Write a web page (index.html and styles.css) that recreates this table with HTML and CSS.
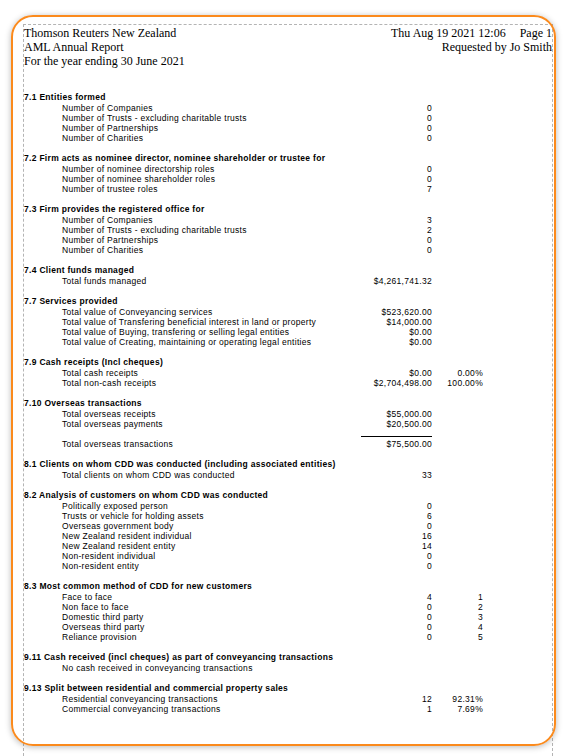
FILE: index.html
```html
<!DOCTYPE html>
<html>
<head>
<meta charset="utf-8">
<link rel="stylesheet" href="styles.css">
</head>
<body>
<div class="page">
  <header class="rpt-head">
    <div class="head-left">
      <div>Thomson Reuters New Zealand</div>
      <div>AML Annual Report</div>
      <div>For the year ending 30 June 2021</div>
    </div>
    <div class="head-right">
      <div><span>Thu Aug 19 2021 12:06</span><span class="pg">Page 1</span></div>
      <div>Requested by Jo Smith</div>
    </div>
  </header>

  <main class="report">
    <section class="sec">
      <h2>7.1 Entities formed</h2>
      <div class="row"><span class="lbl">Number of Companies</span><span class="val">0</span><span class="pct"></span></div>
      <div class="row"><span class="lbl">Number of Trusts - excluding charitable trusts</span><span class="val">0</span><span class="pct"></span></div>
      <div class="row"><span class="lbl">Number of Partnerships</span><span class="val">0</span><span class="pct"></span></div>
      <div class="row"><span class="lbl">Number of Charities</span><span class="val">0</span><span class="pct"></span></div>
    </section>

    <section class="sec">
      <h2>7.2 Firm acts as nominee director, nominee shareholder or trustee for</h2>
      <div class="row"><span class="lbl">Number of nominee directorship roles</span><span class="val">0</span><span class="pct"></span></div>
      <div class="row"><span class="lbl">Number of nominee shareholder roles</span><span class="val">0</span><span class="pct"></span></div>
      <div class="row"><span class="lbl">Number of trustee roles</span><span class="val">7</span><span class="pct"></span></div>
    </section>

    <section class="sec">
      <h2>7.3 Firm provides the registered office for</h2>
      <div class="row"><span class="lbl">Number of Companies</span><span class="val">3</span><span class="pct"></span></div>
      <div class="row"><span class="lbl">Number of Trusts - excluding charitable trusts</span><span class="val">2</span><span class="pct"></span></div>
      <div class="row"><span class="lbl">Number of Partnerships</span><span class="val">0</span><span class="pct"></span></div>
      <div class="row"><span class="lbl">Number of Charities</span><span class="val">0</span><span class="pct"></span></div>
    </section>

    <section class="sec">
      <h2>7.4 Client funds managed</h2>
      <div class="row"><span class="lbl">Total funds managed</span><span class="val">$4,261,741.32</span><span class="pct"></span></div>
    </section>

    <section class="sec">
      <h2>7.7 Services provided</h2>
      <div class="row"><span class="lbl">Total value of Conveyancing services</span><span class="val">$523,620.00</span><span class="pct"></span></div>
      <div class="row"><span class="lbl">Total value of Transfering beneficial interest in land or property</span><span class="val">$14,000.00</span><span class="pct"></span></div>
      <div class="row"><span class="lbl">Total value of Buying, transfering or selling legal entities</span><span class="val">$0.00</span><span class="pct"></span></div>
      <div class="row"><span class="lbl">Total value of Creating, maintaining or operating legal entities</span><span class="val">$0.00</span><span class="pct"></span></div>
    </section>

    <section class="sec">
      <h2>7.9 Cash receipts (Incl cheques)</h2>
      <div class="row"><span class="lbl">Total cash receipts</span><span class="val">$0.00</span><span class="pct">0.00%</span></div>
      <div class="row"><span class="lbl">Total non-cash receipts</span><span class="val">$2,704,498.00</span><span class="pct">100.00%</span></div>
    </section>

    <section class="sec">
      <h2>7.10 Overseas transactions</h2>
      <div class="row"><span class="lbl">Total overseas receipts</span><span class="val">$55,000.00</span><span class="pct"></span></div>
      <div class="row"><span class="lbl">Total overseas payments</span><span class="val">$20,500.00</span><span class="pct"></span></div>
      <div class="row total"><span class="lbl">Total overseas transactions</span><span class="val">$75,500.00</span><span class="pct"></span></div>
    </section>

    <section class="sec">
      <h2>8.1 Clients on whom CDD was conducted (including associated entities)</h2>
      <div class="row"><span class="lbl">Total clients on whom CDD was conducted</span><span class="val">33</span><span class="pct"></span></div>
    </section>

    <section class="sec">
      <h2>8.2 Analysis of customers on whom CDD was conducted</h2>
      <div class="row"><span class="lbl">Politically exposed person</span><span class="val">0</span><span class="pct"></span></div>
      <div class="row"><span class="lbl">Trusts or vehicle for holding assets</span><span class="val">6</span><span class="pct"></span></div>
      <div class="row"><span class="lbl">Overseas government body</span><span class="val">0</span><span class="pct"></span></div>
      <div class="row"><span class="lbl">New Zealand resident individual</span><span class="val">16</span><span class="pct"></span></div>
      <div class="row"><span class="lbl">New Zealand resident entity</span><span class="val">14</span><span class="pct"></span></div>
      <div class="row"><span class="lbl">Non-resident individual</span><span class="val">0</span><span class="pct"></span></div>
      <div class="row"><span class="lbl">Non-resident entity</span><span class="val">0</span><span class="pct"></span></div>
    </section>

    <section class="sec">
      <h2>8.3 Most common method of CDD for new customers</h2>
      <div class="row"><span class="lbl">Face to face</span><span class="val">4</span><span class="pct">1</span></div>
      <div class="row"><span class="lbl">Non face to face</span><span class="val">0</span><span class="pct">2</span></div>
      <div class="row"><span class="lbl">Domestic third party</span><span class="val">0</span><span class="pct">3</span></div>
      <div class="row"><span class="lbl">Overseas third party</span><span class="val">0</span><span class="pct">4</span></div>
      <div class="row"><span class="lbl">Reliance provision</span><span class="val">0</span><span class="pct">5</span></div>
    </section>

    <section class="sec">
      <h2>9.11 Cash received (incl cheques) as part of conveyancing transactions</h2>
      <div class="row"><span class="lbl">No cash received in conveyancing transactions</span><span class="val"></span><span class="pct"></span></div>
    </section>

    <section class="sec">
      <h2>9.13 Split between residential and commercial property sales</h2>
      <div class="row"><span class="lbl">Residential conveyancing transactions</span><span class="val">12</span><span class="pct">92.31%</span></div>
      <div class="row"><span class="lbl">Commercial conveyancing transactions</span><span class="val">1</span><span class="pct">7.69%</span></div>
    </section>
  </main>
</div>
<div class="frame"></div>
</body>
</html>
```

FILE: styles.css
```css
html, body {
  margin: 0;
  padding: 0;
  background: #ffffff;
}

body {
  width: 582px;
  height: 756px;
  overflow: hidden;
  position: relative;
}

.page {
  margin: 24px 0 0 23px;
  width: 530px;
  height: 732px;
  border-top: 1px dashed #b4b4b4;
  border-left: 1px dashed #b4b4b4;
  border-right: 1px dashed #b4b4b4;
  box-sizing: border-box;
  padding: 1px 0 0 0;
  color: #000;
}

.rpt-head {
  display: flex;
  justify-content: space-between;
  font-family: "Liberation Serif", "Times New Roman", serif;
  font-size: 12px;
  line-height: 14px;
}

.head-right {
  text-align: right;
}

.head-right .pg {
  margin-left: 14px;
}

.report {
  margin-top: 24px;
  font-family: "Liberation Sans", Arial, sans-serif;
  font-size: 8.5px;
  letter-spacing: 0.3px;
}

.sec + .sec {
  margin-top: 10px;
}

.sec h2 {
  margin: 0;
  font-size: 8.5px;
  font-weight: bold;
  line-height: 11px;
  white-space: nowrap;
}

.row {
  display: grid;
  grid-template-columns: 270px 100px 51px;
  padding-left: 38px;
  line-height: 10px;
  height: 10px;
  white-space: nowrap;
}

.row .lbl {
  overflow: visible;
}

.row .val,
.row .pct {
  text-align: right;
}

.row.total {
  margin-top: 10px;
}

.row.total .val {
  position: relative;
}

.row.total .val::before {
  content: "";
  position: absolute;
  right: 0;
  top: -3px;
  width: 71px;
  border-top: 1px solid #000;
}

.frame {
  position: absolute;
  left: 11px;
  top: 15px;
  width: 545px;
  height: 731px;
  box-sizing: border-box;
  border: 2px solid #fb8a1c;
  border-radius: 22px;
  box-shadow: 0 1px 6px rgba(0, 0, 0, 0.28);
  pointer-events: none;
}
```
